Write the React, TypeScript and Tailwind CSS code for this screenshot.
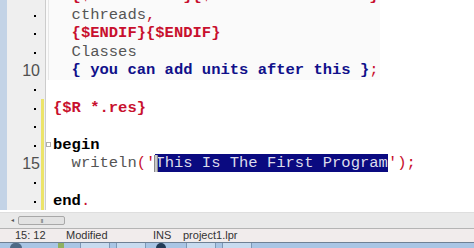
import React from 'react';

type Seg = { t: string; c?: string };

const RED = 'text-[#c8102e]';
const REDB = 'text-[#c8102e] font-bold';
const GREY = 'text-[#555555]';
const NAVY = 'text-[#10108a] font-bold';
const KEY = 'text-black font-bold';

const lines: { n: number; segs: Seg[]; mod?: boolean }[] = [
  { n: 6, segs: [{ t: '  ' }, { t: '{$IFDEF UNIX}{$IFDEF UseCThreads}', c: REDB }] },
  { n: 7, segs: [{ t: '  ' }, { t: 'cthreads', c: GREY }, { t: ',', c: RED }] },
  { n: 8, segs: [{ t: '  ' }, { t: '{$ENDIF}{$ENDIF}', c: REDB }] },
  { n: 9, segs: [{ t: '  ' }, { t: 'Classes', c: GREY }] },
  { n: 10, segs: [{ t: '  ' }, { t: '{ you can add units after this }', c: NAVY }, { t: ';', c: RED }] },
  { n: 11, segs: [], mod: false },
  { n: 12, segs: [{ t: '{$R *.res}', c: REDB }], mod: true },
  { n: 13, segs: [], mod: true },
  { n: 14, segs: [{ t: 'begin', c: KEY }], mod: true },
  {
    n: 15,
    segs: [
      { t: '  ' },
      { t: 'writeln', c: GREY },
      { t: "('", c: RED },
      { t: 'This Is The First Program', c: 'bg-[#0a0a80] text-[#dcdcec]' },
      { t: "');", c: RED },
    ],
    mod: true,
  },
  { n: 16, segs: [], mod: true },
  { n: 17, segs: [{ t: 'end', c: KEY }, { t: '.', c: RED }], mod: true },
];

const Gutter = ({ n, mod }: { n: number; mod?: boolean }) => (
  <div className="flex h-full shrink-0">
    <div className="w-[7px] bg-[#c3d3e6]" />
    <div className="w-[38px] bg-[#efefef] flex items-center justify-end relative">
      {n % 5 === 0 ? (
        <span className="pr-[5px] text-[16px] text-[#505050] font-['Liberation_Sans',sans-serif]">{n}</span>
      ) : (
        <span className="w-[2px] h-[2px] bg-black mr-[9px] mt-[2px]" />
      )}
      {mod && <span className="absolute right-[1px] top-0 h-full w-[3px] bg-[#ece46a]" />}
    </div>
    <div className="w-[1px] bg-[#cccccc]" />
  </div>
);

export default function App() {
  return (
    <div className="w-[474px] h-[248px] overflow-hidden bg-white flex flex-col font-['Liberation_Sans',sans-serif]">
      <div className="h-[212px] overflow-hidden relative">
        <div className="mt-[-13px]">
          {lines.map((l) => (
            <div key={l.n} className="flex h-[18.6px] items-center">
              <Gutter n={l.n} mod={l.mod} />
              <div
                className={
                  'flex-1 h-full flex items-center relative ' +
                  (l.n <= 10 ? 'bg-[#fafafa]' : '')
                }
              >
                {l.n <= 10 && <span className="absolute left-[2px] top-0 h-full w-[1px] bg-[#e6e6e6]" />}
                <pre className="pl-[7px] text-[15.5px] leading-[18.6px] font-['Liberation_Mono',monospace] whitespace-pre">
                  {l.segs.map((s, i) => (
                    <span key={i} className={s.c}>
                      {s.t}
                    </span>
                  ))}
                </pre>
                {l.n === 14 && (
                  <span className="absolute left-[0px] top-[6px] w-[5px] h-[5px] border border-[#b0b0b0] bg-white" />
                )}
                {l.n === 15 && (
                  <span className="absolute left-[108px] top-[1px] w-[4px] h-[17px] border-x border-[#8a8a8a] bg-[#c8c8c8]" />
                )}
              </div>
            </div>
          ))}
        </div>
        <div className="absolute left-[380px] top-0 w-[94px] h-[81px] bg-white" />
      </div>

      {/* scrollbar */}
      <div className="h-[16px] flex items-center bg-[#e9e9e9] border-t border-[#dedede]">
        <span className="w-[13px] pl-[11px] text-[6px] text-[#555]">◂</span>
        <div className="ml-[5px] w-[47px] h-[9px] rounded-[2px] border border-[#a8a8a8] bg-[#e2e2e2] flex items-center justify-center">
          <span className="text-[6px] leading-none text-[#777] tracking-[-1px]">III</span>
        </div>
      </div>
      <div className="h-[1px] bg-[#b4b4b4]" />

      {/* status bar */}
      <div className="h-[13px] flex items-center bg-[#f1ecec] text-[11px] text-[#333]">
        <span className="pl-[15px] w-[66px]">15: 12</span>
        <span className="w-[87px]">Modified</span>
        <span className="w-[30px]">INS</span>
        <span>project1.lpr</span>
      </div>
      <div className="h-[1px] bg-[#6e8094]" />

      {/* taskbar */}
      <div className="flex-1 bg-[#a9c5e4] flex items-start gap-[6px] pl-[10px]">
        <span className="w-[12px] h-[5px] rounded-t-full bg-[#4f6a86]" />
        <span className="ml-[30px] w-[6px] h-[5px] bg-[#8fb060]" />
        <span className="ml-[10px] w-[30px] h-[5px] bg-[#c8dbef] border-x border-[#7d98b6]" />
        <span className="w-[30px] h-[5px] bg-[#c8dbef] border-x border-[#7d98b6]" />
        <span className="ml-[4px] w-[10px] h-[5px] rounded-t-full bg-[#223a55]" />
        <span className="ml-[14px] w-[30px] h-[5px] bg-[#c8dbef] border-x border-[#7d98b6]" />
        <span className="w-[30px] h-[5px] bg-[#c8dbef] border-x border-[#7d98b6]" />
      </div>
    </div>
  );
}
